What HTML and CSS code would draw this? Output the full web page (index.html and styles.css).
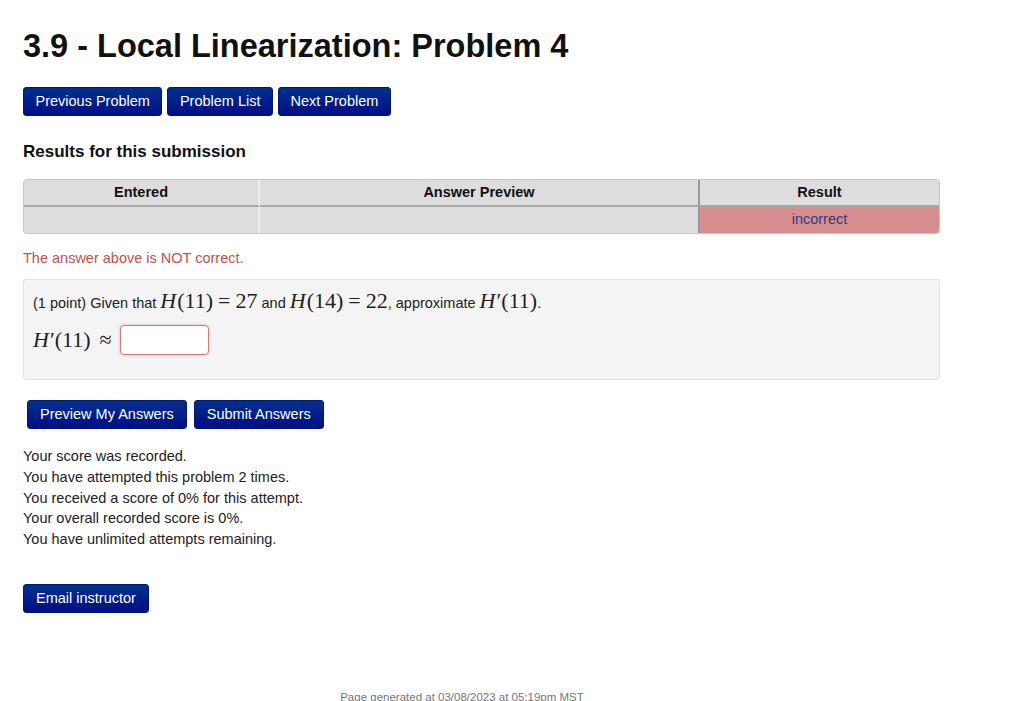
FILE: index.html
```html
<!DOCTYPE html>
<html>
<head>
<meta charset="utf-8">
<link rel="stylesheet" href="styles.css">
</head>
<body>
<div class="page">
  <h1 class="title">3.9 - Local Linearization: Problem 4</h1>
  <div class="nav">
    <span class="btn">Previous Problem</span>
    <span class="btn">Problem List</span>
    <span class="btn">Next Problem</span>
  </div>
  <h3 class="results-title">Results for this submission</h3>
  <table class="attempt">
    <tr>
      <th class="c1">Entered</th>
      <th class="c2">Answer Preview</th>
      <th class="c3">Result</th>
    </tr>
    <tr>
      <td class="c1"></td>
      <td class="c2"></td>
      <td class="c3 bad">incorrect</td>
    </tr>
  </table>
  <div class="not-correct">The answer above is NOT correct.</div>
  <div class="problem">
    <div class="pline">(1 point) Given that <span class="m"><i>H</i>(11)<span class="rel">=</span>27</span> and <span class="m"><i>H</i>(14)<span class="rel">=</span>22</span>, approximate <span class="m"><i>H</i>′(11)</span>.</div>
    <div class="aline"><span class="m"><i>H</i>′(11)<span class="rel last">≈</span></span><span class="ans"></span></div>
  </div>
  <div class="submit">
    <span class="btn">Preview My Answers</span>
    <span class="btn">Submit Answers</span>
  </div>
  <div class="score">
    <div>Your score was recorded.</div>
    <div>You have attempted this problem 2 times.</div>
    <div>You received a score of 0% for this attempt.</div>
    <div>Your overall recorded score is 0%.</div>
    <div>You have unlimited attempts remaining.</div>
  </div>
  <div class="email"><span class="btn">Email instructor</span></div>
  <div class="footer">Page generated at 03/08/2023 at 05:19pm MST</div>
</div>
</body>
</html>
```

FILE: styles.css
```css
html, body {
  margin: 0;
  padding: 0;
  background: #fff;
}
body {
  font-family: "Liberation Sans", Arial, sans-serif;
  font-size: 14.5px;
  color: #222;
}
.page {
  padding: 0 23px;
  width: 917px;
}
.title {
  margin: 0;
  padding-top: 28px;
  font-size: 32.5px;
  line-height: 37px;
  font-weight: bold;
  color: #111;
}
.nav {
  display: flex;
  gap: 5px;
  margin-top: 22px;
}
.btn {
  display: inline-block;
  height: 29px;
  padding: 0 12px;
  box-sizing: border-box;
  color: #fff;
  font-size: 14.5px;
  background: linear-gradient(#00308f, #000e85);
  border: 1px solid #001a6e;
  border-radius: 3px;
  line-height: 27px;
}
.nav .btn { padding: 0 11.5px; }
.results-title {
  margin: 26px 0 0;
  font-size: 17px;
  line-height: 20px;
  font-weight: bold;
  color: #111;
}
.attempt {
  margin-top: 17px;
  width: 917px;
  border-collapse: separate;
  border-spacing: 0;
  border: 1px solid #c8c8c8;
  border-radius: 4px;
  background: #ddd;
  overflow: hidden;
}
.attempt th, .attempt td {
  padding: 0;
  text-align: center;
  background: #ddd;
}
.attempt th {
  height: 25px;
  font-size: 14.5px;
  font-weight: bold;
  color: #111;
  border-bottom: 2px solid #a8a8a8;
  vertical-align: top;
  line-height: 25px;
}
.attempt td {
  height: 26px;
  line-height: 25px;
  vertical-align: top;
}
.attempt .c1 { width: 234px; border-right: 2px solid #eee; }
.attempt .c2 { width: 438px; border-right: 2px solid #999; }
.attempt td.bad {
  background: #d68f8e;
  color: #2e3a8c;
}
.not-correct {
  margin-top: 16px;
  color: #c4504c;
  line-height: 16px;
}
.problem {
  margin-top: 13px;
  height: 101px;
  box-sizing: border-box;
  background: #f4f4f4;
  border: 1px solid #e3e3e3;
  border-radius: 3px;
  padding: 7px 9px;
}
.pline {
  line-height: 28px;
  color: #222;
}
.m {
  font-family: "Liberation Serif", "DejaVu Serif", serif;
  font-size: 22px;
  color: #222;
}
.m i { font-style: italic; margin-right: 1px; }
.rel { margin: 0 5px; }
.rel.last { margin: 0 0 0 9px; }
.aline {
  display: flex;
  align-items: center;
  gap: 8px;
  margin-top: 8px;
}
.ans {
  display: inline-block;
  width: 89px;
  height: 30px;
  box-sizing: border-box;
  background: #fff;
  border: 1px solid #d47a78;
  border-radius: 4px;
  box-shadow: 0 0 3px rgba(210, 110, 110, 0.5);
}
.submit {
  display: flex;
  gap: 7px;
  margin-top: 20px;
  padding-left: 4px;
}
.score {
  margin-top: 17px;
  line-height: 20.8px;
  color: #222;
}
.email {
  margin-top: 34px;
}
.footer {
  margin-top: 78px;
  width: 878px;
  text-align: center;
  font-size: 11.5px;
  color: #777;
}
```
